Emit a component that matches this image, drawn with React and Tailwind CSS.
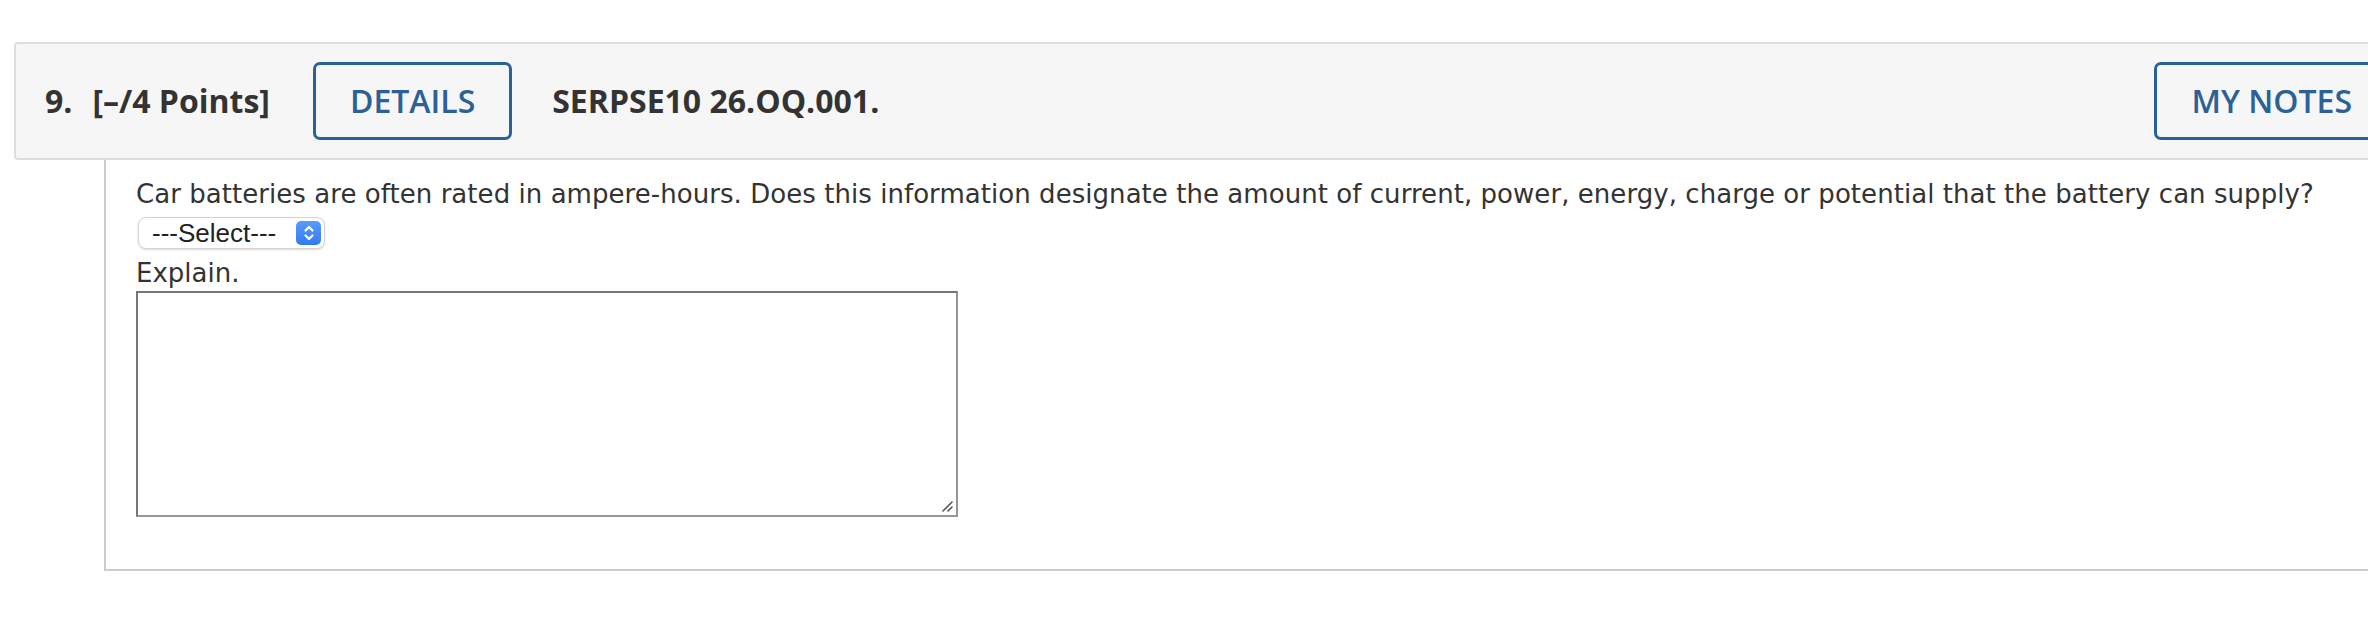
export default function App() {
  return (
    <div className="w-[2368px] h-[624px] overflow-hidden bg-white text-[#333333]">
      <div className="pt-[42px] pl-[14px] w-[2415px]">
        {/* Question header */}
        <div
          className="flex items-center h-[118px] border-2 border-[#dddddd] rounded-[4px] bg-[#f6f6f6] pl-[29px] pr-[24px]"
          style={{ fontFamily: '"Open Sans", sans-serif' }}
        >
          <span className="text-[32px] font-bold leading-none">9.</span>
          <span className="ml-[20px] text-[32px] font-bold leading-none">[–/4 Points]</span>
          <button className="ml-[43px] h-[78px] px-[34px] border-[3px] border-[#2b6196] rounded-[7px] text-[#2b6196] text-[32px] font-semibold leading-none">
            DETAILS
          </button>
          <span className="ml-[40px] text-[32px] font-bold leading-none">SERPSE10 26.OQ.001.</span>
          <button className="ml-auto h-[78px] px-[34px] border-[3px] border-[#2b6196] rounded-[7px] text-[#2b6196] text-[32px] font-semibold leading-none whitespace-nowrap">
            MY NOTES
          </button>
        </div>

        {/* Question body */}
        <div
          className="ml-[90px] border-l-2 border-b-2 border-[#cccccc] pl-[30px] pt-[17px] pb-[52px]"
          style={{ fontFamily: '"DejaVu Sans", Verdana, sans-serif' }}
        >
          <p className="text-[26px] leading-[34px] whitespace-nowrap tracking-[0.05px]">
            Car batteries are often rated in ampere-hours. Does this information designate the amount of current, power, energy, charge or potential that the battery can supply?
          </p>
          <div
            className="mt-[6px] ml-[2px] flex items-center w-[187px] h-[32px] rounded-[8px] bg-white border border-[#d4d4d4] shadow-[0_1px_2px_rgba(0,0,0,0.15)] pl-[13px] pr-[3px]"
            style={{ fontFamily: '"Liberation Sans", Arial, sans-serif' }}
          >
            <span className="text-[26px] leading-none text-[#222222]">---Select---</span>
            <span className="ml-auto flex items-center justify-center w-[25px] h-[24px] rounded-[5px] bg-gradient-to-b from-[#5a9cf8] to-[#2f7af5]">
              <svg width="12" height="18" viewBox="0 0 12 18" fill="none" stroke="white" strokeWidth="2.2" strokeLinecap="round" strokeLinejoin="round">
                <path d="M2.5 6.5 L6 3 L9.5 6.5" />
                <path d="M2.5 11.5 L6 15 L9.5 11.5" />
              </svg>
            </span>
          </div>
          <p className="mt-[7px] text-[26px] leading-[34px]">Explain.</p>
          <div className="relative mt-[1px] w-[822px] h-[226px] bg-white border-2 border-t-[#767676] border-l-[#767676] border-r-[#969696] border-b-[#969696]">
            <svg className="absolute right-[2px] bottom-[2px]" width="14" height="14" viewBox="0 0 14 14" stroke="#555555" strokeWidth="1.6" strokeLinecap="round">
              <path d="M12 3 L3 12" />
              <path d="M12 8 L8 12" />
            </svg>
          </div>
        </div>
      </div>
    </div>
  );
}
